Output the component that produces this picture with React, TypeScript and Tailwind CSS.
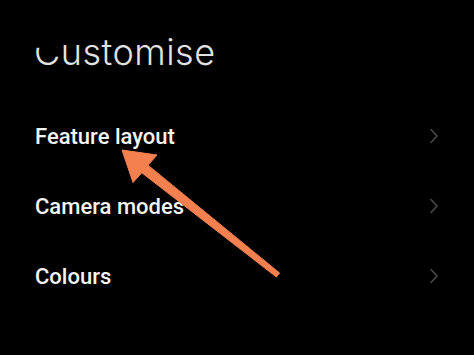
const items = ['Feature layout', 'Camera modes', 'Colours'];

function Chevron() {
  return (
    <svg width="10" height="16" viewBox="0 0 10 16" fill="none">
      <path d="M2 1.5 L8 8 L2 14.5" stroke="#4a4a4a" strokeWidth="1.6" strokeLinecap="round" strokeLinejoin="round" />
    </svg>
  );
}

function PointerArrow() {
  return (
    <svg className="absolute left-0 top-0 pointer-events-none" width="474" height="355" viewBox="0 0 474 355">
      <polygon
        points="122,150 157,155 148,165.2 279.6,273 276.4,277 141.8,172.8 133,182.5"
        fill="#f5804f"
        stroke="#f5804f"
        strokeWidth="1"
        strokeLinejoin="round"
      />
    </svg>
  );
}

export default function App() {
  return (
    <div className="relative w-[474px] h-[355px] overflow-hidden bg-black font-['Roboto',sans-serif]">
      {/* Header */}
      <div className="h-[101px] pl-[34px] pt-[34px]">
        <h1 className="font-['Inter',sans-serif] text-[36px] leading-9 font-light tracking-[0.5px] text-[#e2e2e2]">
          <span className="inline-block [clip-path:inset(38%_0_0_0)]">C</span>ustomise
        </h1>
      </div>

      {/* Settings rows */}
      <div className="flex flex-col">
        {items.map(label => (
          <div key={label} className="flex h-[70px] items-center justify-between pl-[35px] pr-[35px]">
            <span className="text-[22px] font-medium text-[#f4f4f4]">{ label }</span>
            <Chevron />
          </div>
        ))}
      </div>

      <PointerArrow />
    </div>
  );
}
